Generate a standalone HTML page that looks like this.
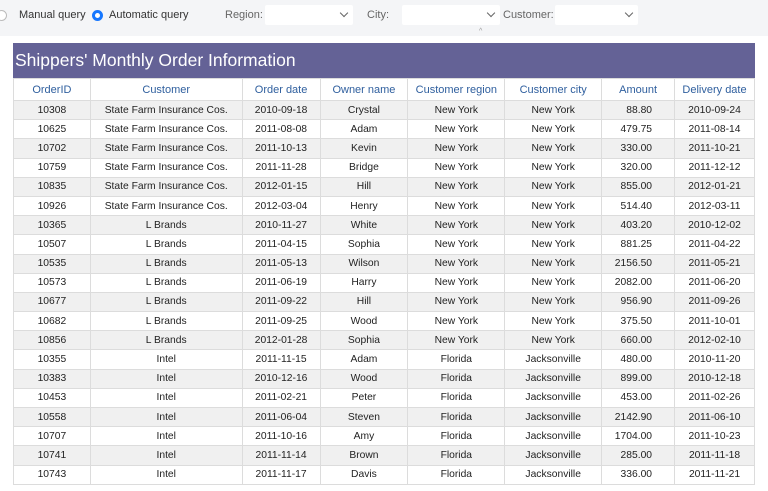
<!DOCTYPE html>
<html><head><style>
*{margin:0;padding:0;box-sizing:border-box}
body{width:768px;height:491px;overflow:hidden;background:#fff;font-family:"Liberation Sans",Arial,sans-serif;position:relative}
.top{position:absolute;left:0;top:0;width:768px;height:36px;background:#f4f5f7;font-size:11px;color:#333}
.top span{position:absolute;top:9px}
.rad{position:absolute;top:10px;width:11px;height:11px;border-radius:50%;border:1px solid #bbb;background:#fff}
.rad.on{border:3px solid #1677ff}
.sel{position:absolute;top:5px;height:20px;background:#fff;border-radius:2px}
.sel:after{content:"";position:absolute;right:6px;top:5px;width:5px;height:5px;border-right:1px solid #666;border-bottom:1px solid #666;transform:rotate(45deg)}
.title{position:absolute;left:13px;top:43px;width:742px;height:35px;background:#646296;color:#fff;font-size:17.5px;line-height:35px;padding-left:2px}
table{position:absolute;left:13px;top:78px;width:742px;border-collapse:collapse;font-size:10.3px;color:#222}
td,th{border:1px solid #dcdcdc;text-align:center;height:19.2px;padding:0;white-space:nowrap}
th{font-weight:normal;color:#2f5f9e;font-size:11px;height:22px}
tr:nth-child(even) td{background:#f0f0f0}
td.r{text-align:right;padding-right:22px}
</style></head><body>
<div class="top">
<div class="rad" style="left:-4px"></div><span style="left:19px">Manual query</span>
<div class="rad on" style="left:92px"></div><span style="left:109px">Automatic query</span>
<span style="left:225px;color:#666">Region:</span><div class="sel" style="left:265px;width:88px"></div>
<span style="left:367px;color:#666">City:</span><div class="sel" style="left:402px;width:98px"></div>
<span style="left:503px;color:#666">Customer:</span><div class="sel" style="left:555px;width:83px"></div>
<span style="left:479px;top:28px;font-size:7px;color:#999">^</span>
</div>
<div class="title">Shippers' Monthly Order Information</div>
<table>
<colgroup><col style="width:77px"><col style="width:152px"><col style="width:78px"><col style="width:88px"><col style="width:97px"><col style="width:97px"><col style="width:73px"><col style="width:80px"></colgroup>
<tr><th>OrderID</th><th>Customer</th><th>Order date</th><th>Owner name</th><th>Customer region</th><th>Customer city</th><th>Amount</th><th>Delivery date</th></tr>
<tr><td>10308</td><td>State Farm Insurance Cos.</td><td>2010-09-18</td><td>Crystal</td><td>New York</td><td>New York</td><td class="r">88.80</td><td>2010-09-24</td></tr>
<tr><td>10625</td><td>State Farm Insurance Cos.</td><td>2011-08-08</td><td>Adam</td><td>New York</td><td>New York</td><td class="r">479.75</td><td>2011-08-14</td></tr>
<tr><td>10702</td><td>State Farm Insurance Cos.</td><td>2011-10-13</td><td>Kevin</td><td>New York</td><td>New York</td><td class="r">330.00</td><td>2011-10-21</td></tr>
<tr><td>10759</td><td>State Farm Insurance Cos.</td><td>2011-11-28</td><td>Bridge</td><td>New York</td><td>New York</td><td class="r">320.00</td><td>2011-12-12</td></tr>
<tr><td>10835</td><td>State Farm Insurance Cos.</td><td>2012-01-15</td><td>Hill</td><td>New York</td><td>New York</td><td class="r">855.00</td><td>2012-01-21</td></tr>
<tr><td>10926</td><td>State Farm Insurance Cos.</td><td>2012-03-04</td><td>Henry</td><td>New York</td><td>New York</td><td class="r">514.40</td><td>2012-03-11</td></tr>
<tr><td>10365</td><td>L Brands</td><td>2010-11-27</td><td>White</td><td>New York</td><td>New York</td><td class="r">403.20</td><td>2010-12-02</td></tr>
<tr><td>10507</td><td>L Brands</td><td>2011-04-15</td><td>Sophia</td><td>New York</td><td>New York</td><td class="r">881.25</td><td>2011-04-22</td></tr>
<tr><td>10535</td><td>L Brands</td><td>2011-05-13</td><td>Wilson</td><td>New York</td><td>New York</td><td class="r">2156.50</td><td>2011-05-21</td></tr>
<tr><td>10573</td><td>L Brands</td><td>2011-06-19</td><td>Harry</td><td>New York</td><td>New York</td><td class="r">2082.00</td><td>2011-06-20</td></tr>
<tr><td>10677</td><td>L Brands</td><td>2011-09-22</td><td>Hill</td><td>New York</td><td>New York</td><td class="r">956.90</td><td>2011-09-26</td></tr>
<tr><td>10682</td><td>L Brands</td><td>2011-09-25</td><td>Wood</td><td>New York</td><td>New York</td><td class="r">375.50</td><td>2011-10-01</td></tr>
<tr><td>10856</td><td>L Brands</td><td>2012-01-28</td><td>Sophia</td><td>New York</td><td>New York</td><td class="r">660.00</td><td>2012-02-10</td></tr>
<tr><td>10355</td><td>Intel</td><td>2011-11-15</td><td>Adam</td><td>Florida</td><td>Jacksonville</td><td class="r">480.00</td><td>2010-11-20</td></tr>
<tr><td>10383</td><td>Intel</td><td>2010-12-16</td><td>Wood</td><td>Florida</td><td>Jacksonville</td><td class="r">899.00</td><td>2010-12-18</td></tr>
<tr><td>10453</td><td>Intel</td><td>2011-02-21</td><td>Peter</td><td>Florida</td><td>Jacksonville</td><td class="r">453.00</td><td>2011-02-26</td></tr>
<tr><td>10558</td><td>Intel</td><td>2011-06-04</td><td>Steven</td><td>Florida</td><td>Jacksonville</td><td class="r">2142.90</td><td>2011-06-10</td></tr>
<tr><td>10707</td><td>Intel</td><td>2011-10-16</td><td>Amy</td><td>Florida</td><td>Jacksonville</td><td class="r">1704.00</td><td>2011-10-23</td></tr>
<tr><td>10741</td><td>Intel</td><td>2011-11-14</td><td>Brown</td><td>Florida</td><td>Jacksonville</td><td class="r">285.00</td><td>2011-11-18</td></tr>
<tr><td>10743</td><td>Intel</td><td>2011-11-17</td><td>Davis</td><td>Florida</td><td>Jacksonville</td><td class="r">336.00</td><td>2011-11-21</td></tr>
</table>
</body></html>
